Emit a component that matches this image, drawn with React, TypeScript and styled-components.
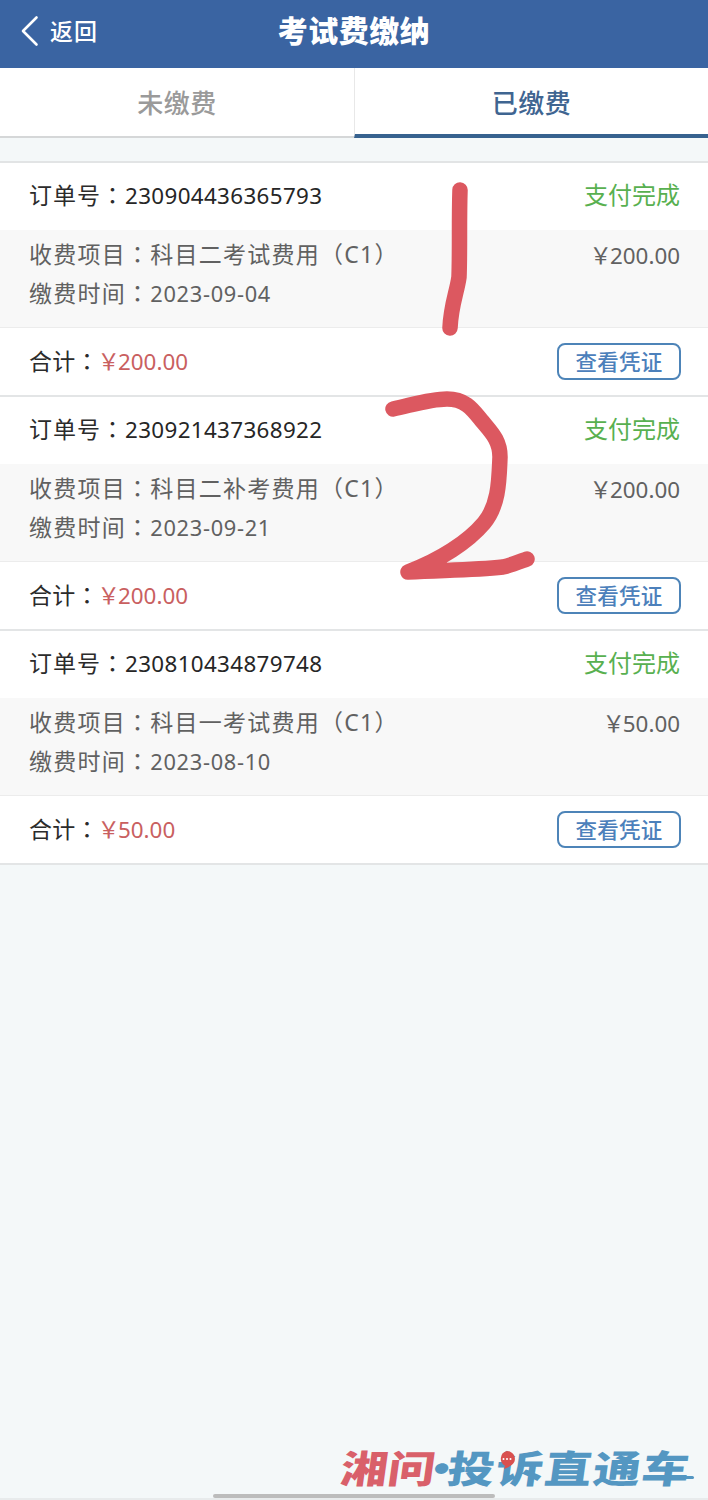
import React from 'react';
import styled, { createGlobalStyle } from 'styled-components';

const Global = createGlobalStyle`
  html, body { margin: 0; padding: 0; background: #f4f8f9; }
  body { font-family: "Noto Sans", "Noto Sans CJK SC", sans-serif; }
  * { box-sizing: border-box; }
`;
const Page = styled.div`
  position: relative; width: 708px; height: 1500px; overflow: hidden;
  background: #f4f8f9; display: flex; flex-direction: column;
  font-family: "Noto Sans", "Noto Sans CJK SC", sans-serif;
`;
const Header = styled.header`
  height: 68px; background: #3a64a2; display: grid; grid-template-columns: 1fr auto 1fr;
  align-items: center; color: #fff; padding: 0 20px 6px; flex: none;
`;
const Back = styled.div`
  display: flex; align-items: center; gap: 10px; font-size: 23px; font-weight: 500; line-height: 1; letter-spacing: 1px;
`;
const Title = styled.h1`
  margin: 0 0 5px; font-size: 30px; font-weight: 900; letter-spacing: 0.5px; line-height: 1;
  font-family: "Noto Sans CJK SC", sans-serif; grid-column: 2;
`;
const Tabs = styled.nav`
  height: 70px; display: grid; grid-template-columns: 354px 354px; background: #fff; flex: none;
`;
const Tab = styled.div<{ $active?: boolean }>`
  display: flex; align-items: center; justify-content: center;
  font-size: 26px; font-weight: 500; letter-spacing: 0.5px;
  color: ${p => (p.$active ? '#3f6591' : '#9a9a9a')};
  border-bottom: ${p => (p.$active ? '4px solid #37628f' : '2px solid #d5d7d8')};
  border-left: ${p => (p.$active ? '1px solid #e8e8e8' : 'none')};
  padding-top: ${p => (p.$active ? '2px' : '0')};
`;
const List = styled.main`
  margin-top: 23px; border-top: 2px solid #e2e4e5; display: flex; flex-direction: column;
`;
const Card = styled.section`
  background: #fff; border-bottom: 2px solid #e3e5e6;
`;
const TopRow = styled.div`
  height: 67px; padding: 0 28px 6px 29px; display: flex; align-items: center; justify-content: space-between;
  color: #2b2b2b; font-size: 23px;
`;
const OrderNo = styled.span`
  font-size: 22.4px; letter-spacing: 0.35px; color: #262626;
`;
const Label = styled.span`
  letter-spacing: 1px;
`;
const Colon = styled.span`
  font-family: "Noto Sans CJK TC", sans-serif;
`;
const Status = styled.span`
  color: #58b050; font-size: 24px; font-family: "Noto Sans CJK SC", sans-serif; letter-spacing: 0;
`;
const Details = styled.div`
  height: 98px; background: #f8f8f8; border-bottom: 1px solid #ececec;
  padding: 5px 28px 0 29px; display: grid; grid-template-columns: 1fr auto; grid-auto-rows: 38.5px;
  color: #616161; font-size: 23px; align-items: center;
`;
const DetailLine = styled.div`
  grid-column: 1; letter-spacing: 1.25px; line-height: 1;
`;
const Fee = styled.div`
  grid-column: 2; grid-row: 1; font-size: 22.4px; color: #616161;
`;
const Yen = styled.span`
  margin-right: -2px;
`;
const Digits = styled.span`
  font-size: 21.8px; letter-spacing: 0.7px;
`;
const BottomRow = styled.div`
  height: 67px; padding: 0 27px 0 29px; display: flex; align-items: center; justify-content: space-between;
  font-size: 23px; color: #2b2b2b;
`;
const Total = styled.div`
  display: flex; align-items: center; letter-spacing: 0.2px; padding-bottom: 3px;
`;
const Amount = styled.span`
  color: #c9605f; font-size: 22.4px; letter-spacing: 0; margin-left: -1px;
`;
const Voucher = styled.button`
  width: 124px; height: 37px; padding: 0 0 2px; background: #fff; border: 2px solid #4d84b8; border-radius: 8px;
  color: #4c80bb; font: 500 21.5px "Noto Sans CJK SC", sans-serif; letter-spacing: 0.3px;
  display: flex; align-items: center; justify-content: center;
`;
const Scribble = styled.svg`
  position: absolute; left: 0; top: 0; pointer-events: none;
`;
const Logo = styled.div`
  position: absolute; left: 338px; top: 1441px; height: 50px; display: flex; align-items: center;
  font: 900 38px "Noto Sans CJK SC", sans-serif; white-space: nowrap;
  transform: skewX(-8deg) scaleX(1.24); transform-origin: left bottom;
`;
const LogoRed = styled.span` color: #d9606a; `;
const LogoBlue = styled.span` color: #5497c2; letter-spacing: 1.2px; `;
const LogoDot = styled.span` color: #5497c2; margin: 0 -14px; `;
const Bubble = styled.svg`
  position: absolute; left: 497px; top: 1450px;
`;
const LogoUnderline = styled.div`
  position: absolute; left: 657px; top: 1476px; width: 37px; height: 3px; background: #5497c2; border-radius: 2px;
`;
const HomeBar = styled.div`
  position: absolute; left: 213px; top: 1494px; width: 282px; height: 4px; background: #bcbcbc; border-radius: 2px;
`;
const BottomEdge = styled.div`
  position: absolute; left: 0; right: 0; top: 1498px; height: 2px; background: #e8ebec;
`;

const orders = [
  { no: '230904436365793', item: '科目二考试费用（C1）', date: '2023-09-04', fee: '200.00' },
  { no: '230921437368922', item: '科目二补考费用（C1）', date: '2023-09-21', fee: '200.00' },
  { no: '230810434879748', item: '科目一考试费用（C1）', date: '2023-08-10', fee: '50.00' },
];

export default function App() {
  return (
    <Page>
      <Global />
      <Header>
        <Back>
          <svg width="20" height="32" viewBox="0 0 20 32" fill="none" stroke="#fff" strokeWidth="2.6" strokeLinecap="round" strokeLinejoin="round">
            <path d="M16.5 2.5 3 16l13.5 13.500" />
          </svg>
          <span>返回</span>
        </Back>
        <Title>考试费缴纳</Title>
      </Header>
      <Tabs>
        <Tab>未缴费</Tab>
        <Tab $active>已缴费</Tab>
      </Tabs>
      <List>
        {orders.map(o => (
          <Card key={o.no}>
            <TopRow>
              <span>
                <Label>订单号<Colon>：</Colon></Label>
                <OrderNo>{o.no}</OrderNo>
              </span>
              <Status>支付完成</Status>
            </TopRow>
            <Details>
              <DetailLine>收费项目<Colon>：</Colon>{o.item}</DetailLine>
              <Fee><Yen>￥</Yen>{o.fee}</Fee>
              <DetailLine>缴费时间<Colon>：</Colon><Digits>{o.date}</Digits></DetailLine>
            </Details>
            <BottomRow>
              <Total>合计<Colon>：</Colon><Amount><Yen>￥</Yen>{o.fee}</Amount></Total>
              <Voucher>查看凭证</Voucher>
            </BottomRow>
          </Card>
        ))}
      </List>
      <Scribble width="708" height="600" viewBox="0 0 708 600" fill="none" stroke="#dc5860" strokeWidth="15.500" strokeLinecap="round" strokeLinejoin="round">
        <path d="M460 190C459 220 460 250 459 277C457 292 451 305 450 328" />
        <path d="M393 409C412 405 430 399 447 399C466 399 473 410 482 421C491 432 500 440 500 457C499 480 499 505 484 523C468 542 440 560 408 572C448 570 475 570 503 567C512 565 519 562 527 559" />
      </Scribble>
      <Logo>
        <LogoRed>湘问</LogoRed>
        <LogoDot>·</LogoDot>
        <LogoBlue>投诉直通车</LogoBlue>
      </Logo>
      <LogoUnderline />
      <Bubble width="20" height="20" viewBox="0 0 20 20">
        <path d="M10 1a8 8 0 0 1 7.500 10.500C16 15 12 17 7 19l1-3.200A8 8 0 0 1 10 1z" fill="#d9504f" />
        <circle cx="6.500" cy="9" r="1" fill="#fff" /><circle cx="10" cy="9" r="1" fill="#fff" /><circle cx="13.500" cy="9" r="1" fill="#fff" />
      </Bubble>
      <HomeBar />
      <BottomEdge />
    </Page>
  );
}
